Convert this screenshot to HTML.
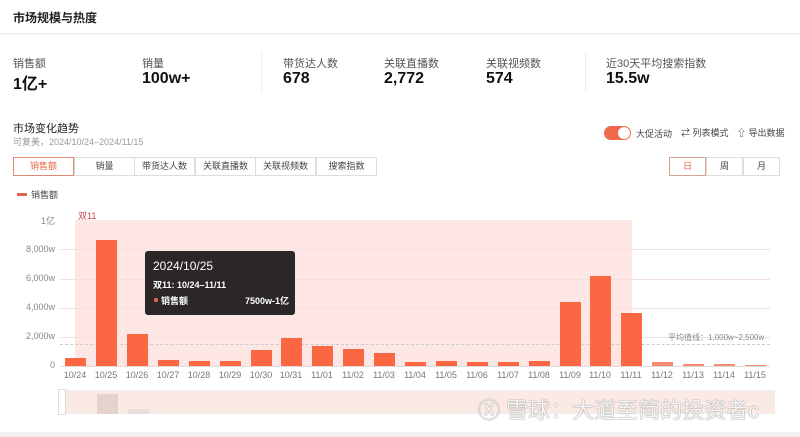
<!DOCTYPE html>
<html><head><meta charset="utf-8"><style>
*{margin:0;padding:0;box-sizing:border-box}
body{width:800px;height:437px;background:#fff;font-family:"Liberation Sans","Noto Sans CJK SC",sans-serif;position:relative;overflow:hidden;color:#222}
.a{position:absolute;white-space:nowrap}
.lbl{font-size:11px;color:#555}
.val{font-size:16px;font-weight:bold;color:#111}
.tab{position:absolute;top:157px;height:19px;border:1px solid #ddd;font-size:9px;color:#444;text-align:center;line-height:17px}
.yl{position:absolute;right:745px;font-size:9px;color:#888}
.xl{position:absolute;top:370px;font-size:9px;color:#777;width:30px;text-align:center}
.bar{position:absolute;background:#fa6742;width:21px}
</style></head><body>
<div class="a" style="left:13px;top:9px;font-size:12px;font-weight:bold">市场规模与热度</div>
<div class="a" style="left:0;top:33px;width:800px;height:2px;background:#f2f2f2"></div>

<div class="a lbl" style="left:13px;top:55px">销售额</div><div class="a val" style="left:13px;top:70px">1亿+</div>
<div class="a lbl" style="left:142px;top:55px">销量</div><div class="a val" style="left:142px;top:70px">100w+</div>
<div class="a" style="left:261px;top:52px;width:1px;height:40px;background:#eee"></div>
<div class="a lbl" style="left:283px;top:55px">带货达人数</div><div class="a val" style="left:283px;top:70px">678</div>
<div class="a lbl" style="left:384px;top:55px">关联直播数</div><div class="a val" style="left:384px;top:70px">2,772</div>
<div class="a lbl" style="left:486px;top:55px">关联视频数</div><div class="a val" style="left:486px;top:70px">574</div>
<div class="a" style="left:585px;top:52px;width:1px;height:40px;background:#eee"></div>
<div class="a lbl" style="left:606px;top:55px">近30天平均搜索指数</div><div class="a val" style="left:606px;top:70px">15.5w</div>

<div class="a" style="left:13px;top:120px;font-size:11px">市场变化趋势</div>
<div class="a" style="left:13px;top:135px;font-size:9px;color:#999">可复美，2024/10/24–2024/11/15</div>

<div class="tab" style="left:13px;width:61px;border-color:#e08a73;color:#e8684a">销售额</div>
<div class="tab" style="left:74px;width:61px">销量</div>
<div class="tab" style="left:134px;width:61px">带货达人数</div>
<div class="tab" style="left:195px;width:61px">关联直播数</div>
<div class="tab" style="left:255px;width:61px">关联视频数</div>
<div class="tab" style="left:316px;width:61px">搜索指数</div>

<div class="a" style="left:604px;top:126px;width:27px;height:14px;border-radius:7px;background:#f0694a"></div>
<div class="a" style="left:618px;top:127px;width:12px;height:12px;border-radius:6px;background:#fff"></div>
<div class="a" style="left:636px;top:127px;font-size:9px;color:#444">大促活动</div>
<div class="a" style="left:681px;top:126px;font-size:9px;color:#444">⇄ 列表模式</div>
<div class="a" style="left:737px;top:126px;font-size:9px;color:#444">⇧ 导出数据</div>

<div class="tab" style="left:669px;width:37px;border-color:#d9a393;color:#e8684a">日</div>
<div class="tab" style="left:706px;width:37px">周</div>
<div class="tab" style="left:743px;width:37px">月</div>

<div class="a" style="left:17px;top:193px;width:10px;height:3px;background:#e0684a"></div>
<div class="a" style="left:31px;top:188px;font-size:9px;color:#444">销售额</div>

<div class="a" style="left:75px;top:220px;width:557px;height:146px;background:#fde6e4"></div>
<div class="a" style="left:78px;top:209px;font-size:9px;color:#c44">双11</div>
<div class="a" style="left:60px;top:249px;width:710px;height:1px;background:#f0e0e0"></div>
<div class="a" style="left:60px;top:279px;width:710px;height:1px;background:#f0e0e0"></div>
<div class="a" style="left:60px;top:308px;width:710px;height:1px;background:#f0e0e0"></div>
<div class="a" style="left:60px;top:337px;width:710px;height:1px;background:#f0e0e0"></div>
<div class="a" style="left:60px;top:366px;width:710px;height:1px;background:#ddd"></div>
<div class="a" style="left:60px;top:344px;width:710px;border-top:1px dashed #ccc"></div>
<div class="a" style="left:668px;top:332px;font-size:8px;color:#888">平均值线：1,000w~2,500w</div>

<div class="yl" style="top:214px">1亿</div>
<div class="yl" style="top:244px">8,000w</div>
<div class="yl" style="top:273px">6,000w</div>
<div class="yl" style="top:302px">4,000w</div>
<div class="yl" style="top:331px">2,000w</div>
<div class="yl" style="top:360px">0</div>

<div class="bar" style="left:65px;top:358px;height:8px"></div>
<div class="bar" style="left:96px;top:240px;height:126px"></div>
<div class="bar" style="left:127px;top:334px;height:32px"></div>
<div class="bar" style="left:158px;top:360px;height:6px"></div>
<div class="bar" style="left:189px;top:361px;height:5px"></div>
<div class="bar" style="left:220px;top:361px;height:5px"></div>
<div class="bar" style="left:251px;top:350px;height:16px"></div>
<div class="bar" style="left:281px;top:338px;height:28px"></div>
<div class="bar" style="left:312px;top:346px;height:20px"></div>
<div class="bar" style="left:343px;top:349px;height:17px"></div>
<div class="bar" style="left:374px;top:353px;height:13px"></div>
<div class="bar" style="left:405px;top:362px;height:4px"></div>
<div class="bar" style="left:436px;top:361px;height:5px"></div>
<div class="bar" style="left:467px;top:362px;height:4px"></div>
<div class="bar" style="left:498px;top:362px;height:4px"></div>
<div class="bar" style="left:529px;top:361px;height:5px"></div>
<div class="bar" style="left:560px;top:302px;height:64px"></div>
<div class="bar" style="left:590px;top:276px;height:90px"></div>
<div class="bar" style="left:621px;top:313px;height:53px"></div>
<div class="bar" style="left:652px;top:362px;height:4px;background:#f48a6e"></div>
<div class="bar" style="left:683px;top:364px;height:2px;background:#f48a6e"></div>
<div class="bar" style="left:714px;top:364px;height:2px;background:#f48a6e"></div>
<div class="bar" style="left:745px;top:365px;height:1px;background:#f48a6e"></div>

<div class="xl" style="left:60px">10/24</div><div class="xl" style="left:91px">10/25</div><div class="xl" style="left:122px">10/26</div><div class="xl" style="left:153px">10/27</div><div class="xl" style="left:184px">10/28</div><div class="xl" style="left:215px">10/29</div><div class="xl" style="left:246px">10/30</div><div class="xl" style="left:276px">10/31</div><div class="xl" style="left:307px">11/01</div><div class="xl" style="left:338px">11/02</div><div class="xl" style="left:369px">11/03</div><div class="xl" style="left:400px">11/04</div><div class="xl" style="left:431px">11/05</div><div class="xl" style="left:462px">11/06</div><div class="xl" style="left:493px">11/07</div><div class="xl" style="left:524px">11/08</div><div class="xl" style="left:555px">11/09</div><div class="xl" style="left:585px">11/10</div><div class="xl" style="left:616px">11/11</div><div class="xl" style="left:647px">11/12</div><div class="xl" style="left:678px">11/13</div><div class="xl" style="left:709px">11/14</div><div class="xl" style="left:740px">11/15</div>

<div class="a" style="left:145px;top:251px;width:150px;height:64px;background:#2b2726;border-radius:3px"></div>
<div class="a" style="left:153px;top:259px;font-size:12px;color:#fff">2024/10/25</div>
<div class="a" style="left:153px;top:278px;font-size:9px;color:#fff;font-weight:bold">双11: 10/24–11/11</div>
<div class="a" style="left:154px;top:298px;width:4px;height:4px;border-radius:2px;background:#f0694a"></div>
<div class="a" style="left:161px;top:294px;font-size:9px;color:#fff;font-weight:bold">销售额</div>
<div class="a" style="left:245px;top:294px;font-size:9px;color:#fff;font-weight:bold">7500w-1亿</div>

<div class="a" style="left:58px;top:390px;width:717px;height:24px;background:#fbeae4;border:1px solid #eee"></div>
<div class="a" style="left:97px;top:394px;width:21px;height:20px;background:#e3d2cd"></div>
<div class="a" style="left:128px;top:409px;width:21px;height:5px;background:#eadcd8"></div>
<div class="a" style="left:58px;top:389px;width:8px;height:26px;background:#fff;border:1px solid #ddd"></div>
<div class="a" style="left:478px;top:393px;font-size:22px;color:#f6f6f6;text-shadow:0 0 1px #888,0 0 1px #888">Ⓧ 雪球：大道至简的投资者c</div>
<div class="a" style="left:0;top:432px;width:800px;height:5px;background:#f2f2f2"></div>
</body></html>
